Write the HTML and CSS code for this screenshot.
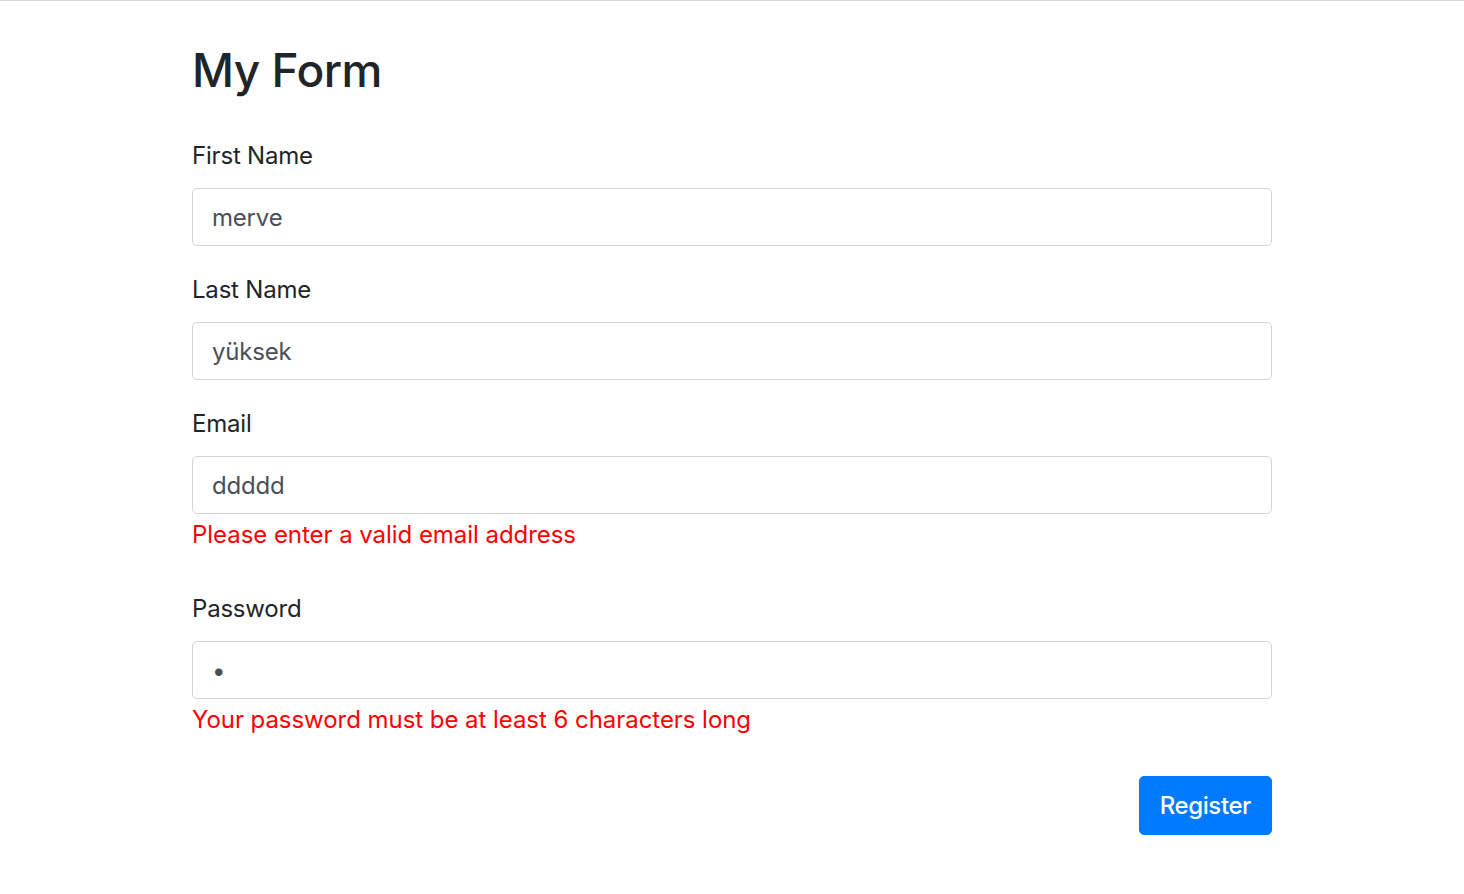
FILE: index.html
```html
<!DOCTYPE html>
<html lang="en">
<head>
<meta charset="utf-8">
<title>My Form</title>
<link rel="stylesheet" href="styles.css">
</head>
<body>
<div class="page">
  <main class="container">
    <h1 class="title">My Form</h1>
    <form class="form" onsubmit="return false">
      <div class="group">
        <label class="label" for="first">First Name</label>
        <input class="control" id="first" type="text" value="merve">
      </div>
      <div class="group">
        <label class="label" for="last">Last Name</label>
        <input class="control" id="last" type="text" value="yüksek">
      </div>
      <div class="group">
        <label class="label" for="email">Email</label>
        <input class="control" id="email" type="text" value="ddddd">
        <div class="error">Please enter a valid email address</div>
      </div>
      <div class="group">
        <label class="label" for="password">Password</label>
        <input class="control" id="password" type="password" value="d">
        <div class="error">Your password must be at least 6 characters long</div>
      </div>
      <div class="actions">
        <button class="btn" type="submit">Register</button>
      </div>
    </form>
  </main>
</div>
</body>
</html>
```

FILE: styles.css
```css
* {
  box-sizing: border-box;
}

html, body {
  margin: 0;
  padding: 0;
  background: #ffffff;
}

body {
  font-family: Inter, "Liberation Sans", sans-serif;
  color: #212529;
  font-size: 24px;
  line-height: 36px;
}

.page {
  border-top: 1px solid #d6d6d6;
  min-height: 893px;
}

.container {
  width: 1080px;
  margin: 0 auto;
}

.title {
  margin: 39px 0 38px;
  font-size: 46px;
  line-height: 60px;
  font-weight: 500;
  letter-spacing: -0.5px;
  color: #212529;
}

.form {
  display: flex;
  flex-direction: column;
}

.group {
  display: flex;
  flex-direction: column;
  margin-bottom: 26px;
}

.label {
  display: block;
  margin-bottom: 14px;
  font-size: 24px;
  line-height: 36px;
  color: #212529;
  letter-spacing: -0.2px;
}

.control {
  display: block;
  width: 100%;
  height: 58px;
  padding: 0 19px;
  font-family: inherit;
  font-size: 24px;
  color: #495057;
  background: #ffffff;
  border: 1px solid #ced4da;
  border-radius: 5px;
  outline: none;
  letter-spacing: -0.2px;
}

.control[type="password"] {
  letter-spacing: 2px;
}

.error {
  margin-top: 3px;
  margin-bottom: 12px;
  color: #ff0000;
  font-size: 24px;
  line-height: 36px;
  letter-spacing: -0.05px;
}

.actions {
  display: flex;
  justify-content: flex-end;
}

.btn {
  height: 59px;
  padding: 0 20px;
  font-family: inherit;
  font-size: 24px;
  line-height: 36px;
  font-weight: 500;
  color: #ffffff;
  background: #007bff;
  border: 1px solid #007bff;
  border-radius: 5px;
  letter-spacing: -0.4px;
  cursor: pointer;
}
```
